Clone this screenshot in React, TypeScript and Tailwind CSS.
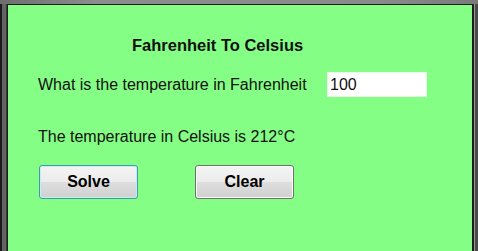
import React from "react";

export default function App() {
  return (
    <div
      className="w-[478px] h-[251px] flex flex-col overflow-hidden bg-[#2a2a2a]"
      style={{ fontFamily: '"Liberation Sans", Arial, sans-serif' }}
    >
      <div className="h-[4px] shrink-0 bg-[linear-gradient(to_right,#6e6e6e,#8c8c8c_20%,#8a8a8a_80%,#7a7a7a)]" />
      <div className="flex flex-1 min-h-0">
        <div className="w-[2px] bg-[#1c1c1c]" />
        <div className="w-[4px] bg-[#646464]" />
        <div className="w-[1px] bg-[#3a3a3a]" />
        <div className="flex-1 border-l border-t border-r-2 border-[#1e1e1e] bg-[#84fe84] pl-[30px] pt-[30px] text-[#111]">
          <div className="ml-[94px] text-[16.5px] leading-[20px] font-bold">Fahrenheit To Celsius</div>
          <div className="mt-[17px] flex items-center h-[25px]">
            <span className="text-[16px] leading-[20px] w-[289px]">What is the temperature in Fahrenheit</span>
            <input
              defaultValue="100"
              readOnly
              className="w-[100px] h-[25px] bg-white border border-[#e6f8e6] pl-[2px] text-[16px] text-[#111] outline-none"
              style={{ fontFamily: '"Liberation Sans", Arial, sans-serif' }}
            />
          </div>
          <div className="mt-[30px] text-[16px] leading-[20px]">The temperature in Celsius is 212°C</div>
          <div className="mt-[18px] flex gap-[57px] ml-[1px]">
            <button
              className="w-[99px] h-[34px] rounded-[3px] border border-[#3b9cae] shadow-[inset_0_0_0_1px_#c8ecf4] bg-[linear-gradient(to_bottom,#f4f4f4_0%,#ececec_50%,#dedede_50%,#d0d0d0_100%)] text-[16px] font-bold text-black"
              style={{ fontFamily: '"Liberation Sans", Arial, sans-serif' }}
            >
              Solve
            </button>
            <button
              className="w-[99px] h-[34px] rounded-[3px] border border-[#707070] shadow-[inset_0_0_0_1px_#fafafa] bg-[linear-gradient(to_bottom,#f4f4f4_0%,#ececec_50%,#dedede_50%,#d0d0d0_100%)] text-[16px] font-bold text-black"
              style={{ fontFamily: '"Liberation Sans", Arial, sans-serif' }}
            >
              Clear
            </button>
          </div>
        </div>
        <div className="w-[1px] bg-[#9a9a9a]" />
        <div className="w-[3px] bg-[#4a4a4a]" />
      </div>
    </div>
  );
}
